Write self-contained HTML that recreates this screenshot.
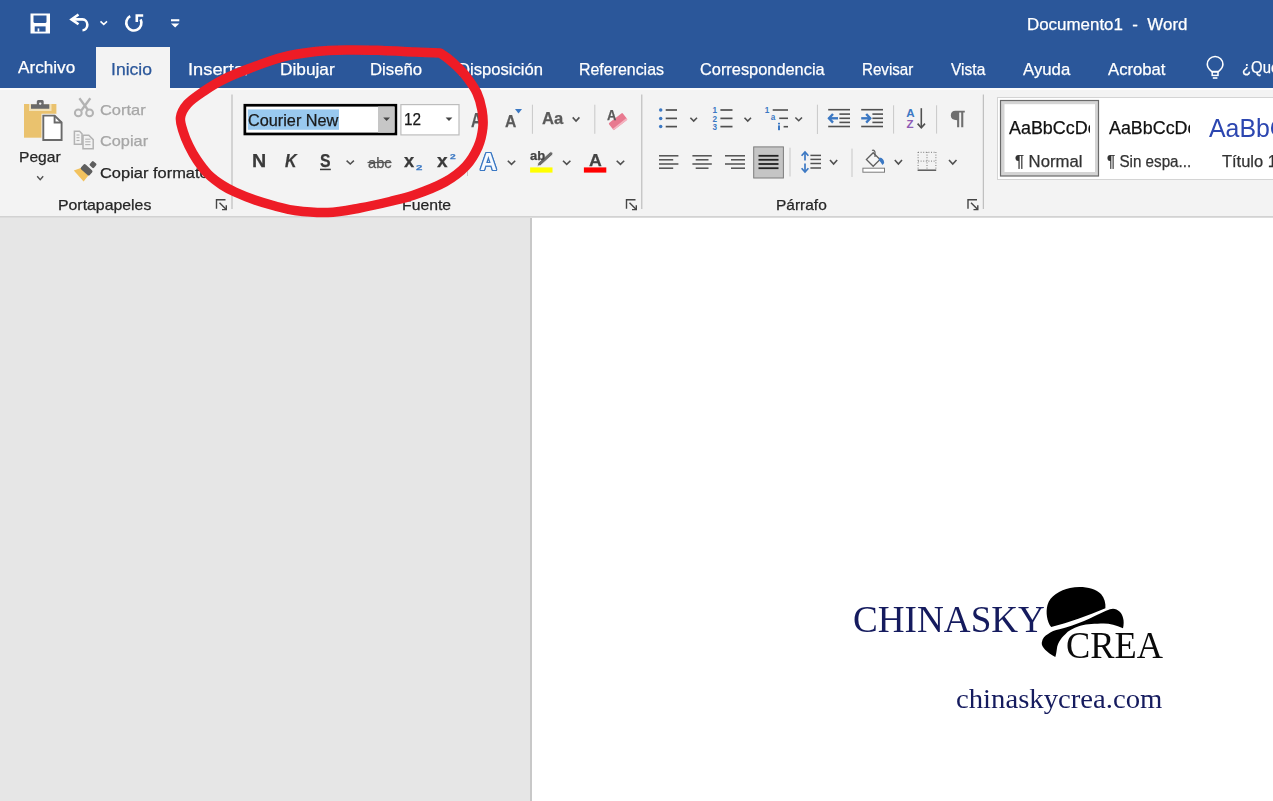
<!DOCTYPE html>
<html><head><meta charset="utf-8"><style>
html,body{margin:0;padding:0;width:1273px;height:801px;overflow:hidden;background:#e6e6e6;position:relative}
.t{position:absolute;white-space:pre;transform-origin:0 0;-webkit-text-stroke:0.25px currentColor}
.r{position:absolute}
svg{position:absolute;left:0;top:0}
</style></head><body>
<div class="r" style="left:0;top:0;width:1273px;height:88px;background:#2b579a"></div>
<div class="r" style="left:0;top:88px;width:1273px;height:128px;background:#f3f3f3"></div><div class="r" style="left:0;top:88px;width:1273px;height:2px;background:#fbfbfb"></div><div class="r" style="left:96px;top:47px;width:74px;height:43px;background:#f3f3f3"></div>
<div class="r" style="left:0;top:216px;width:1273px;height:1px;background:#d2d2d2"></div><div class="r" style="left:0;top:217px;width:1273px;height:1px;background:#dcdcdc"></div>
<div class="r" style="left:530px;top:218px;width:2px;height:583px;background:#c8c8c8"></div>
<div class="r" style="left:532px;top:218px;width:741px;height:583px;background:#fff"></div>
<svg width="1273" height="801" viewBox="0 0 1273 801">
<rect x="30.5" y="13.5" width="19.5" height="20.0" fill="#ffffff"/>
<path d="M33.5 15.5 H46.5 V21.5 Q46.5 23 45 23 H35 Q33.5 23 33.5 21.5 Z" fill="#2b579a"/>
<rect x="34.7" y="26.4" width="10.899999999999999" height="5.200000000000003" fill="#2b579a"/>
<rect x="37.6" y="28.4" width="1.6999999999999957" height="3.200000000000003" fill="#ffffff"/>
<path d="M72 19.4 H82.5 A4.8 5.4 0 0 1 82.5 30.3" fill="none" stroke="#fff" stroke-width="2.6"/>
<polyline points="78.5,14.5 71.5,19.4 78.5,24.2" fill="none" stroke="#fff" stroke-width="2.6" stroke-linejoin="miter"/>
<polyline points="100.5,21.3 103.75,24.3 107,21.3" fill="none" stroke="#fff" stroke-width="1.6"/>
<path d="M130.2 16.2 A7.6 7.6 0 1 0 140.6 19.4" fill="none" stroke="#fff" stroke-width="2.6"/>
<polyline points="136.8,22 136.8,15.5 143.2,15.5" fill="none" stroke="#fff" stroke-width="2.6"/>
<rect x="171" y="19.2" width="8.300000000000011" height="2.1000000000000014" fill="#ffffff"/>
<polygon points="171,23.6 179.3,23.6 175.15,27.6" fill="#fff"/>
<path d="M1211.8 71.6 Q1207.3 68.2 1207.3 64.3 A7.8 7.8 0 0 1 1222.9 64.3 Q1222.9 68.2 1218.4 71.6 Z" fill="none" stroke="#fff" stroke-width="1.6"/>
<rect x="1212.2" y="71.8" width="5.8" height="3.6" fill="none" stroke="#fff" stroke-width="1.5"/>
<line x1="1212.8" y1="78" x2="1217.4" y2="78" stroke="#fff" stroke-width="1.6"/>
<rect x="24" y="104" width="32.4" height="33.69999999999999" fill="#eac26e"/>
<rect x="29" y="104" width="22.5" height="7" fill="#f3e2b8"/>
<path d="M31 104.3 H36.8 V101.5 Q36.8 100 38.3 100 H42.3 Q43.7 100 43.7 101.5 V104.3 H49.3 V108.7 H31 Z" fill="#6a6a6a"/>
<circle cx="40.2" cy="103.6" r="1.2" fill="#f3f3f3"/>
<path d="M41.5 113.8 H56.5 L63.4 120.8 V141.8 H41.5 Z" fill="#f3f3f3"/>
<path d="M43.3 115.6 H54.6 L61.6 122.5 V140 H43.3 Z" fill="#fff" stroke="#6a6a6a" stroke-width="1.9"/>
<polyline points="54.6,115.6 54.6,122.5 61.6,122.5" fill="none" stroke="#6a6a6a" stroke-width="1.9"/>
<polyline points="37.2,176.3 40.2,179.6 43.2,176.3" fill="none" stroke="#505050" stroke-width="1.4"/>
<line x1="79.4" y1="98.2" x2="88.2" y2="110.2" stroke="#b3b3b3" stroke-width="2.3"/>
<line x1="90.3" y1="98.2" x2="81.5" y2="110.2" stroke="#b3b3b3" stroke-width="2.3"/>
<circle cx="78.3" cy="112.9" r="3.4" fill="none" stroke="#b3b3b3" stroke-width="2"/>
<circle cx="89.6" cy="112.9" r="3.4" fill="none" stroke="#b3b3b3" stroke-width="2"/>
<path d="M74.4 131.2 H79.5 L82 133.7 V144.3 H74.4 Z" fill="none" stroke="#b3b3b3" stroke-width="1.5"/>
<path d="M83 135.2 H88.8 L93.2 139.6 V148.8 H83 Z" fill="#f3f3f3" stroke="#b3b3b3" stroke-width="1.5"/>
<line x1="76.5" y1="135" x2="79.5" y2="135" stroke="#b3b3b3" stroke-width="1.1"/>
<line x1="76.5" y1="137.7" x2="79.5" y2="137.7" stroke="#b3b3b3" stroke-width="1.1"/>
<line x1="76.5" y1="140.5" x2="79.5" y2="140.5" stroke="#b3b3b3" stroke-width="1.1"/>
<line x1="85.2" y1="139.2" x2="90.5" y2="139.2" stroke="#b3b3b3" stroke-width="1.1"/>
<line x1="85.2" y1="141.8" x2="90.5" y2="141.8" stroke="#b3b3b3" stroke-width="1.1"/>
<line x1="85.2" y1="144.6" x2="90.5" y2="144.6" stroke="#b3b3b3" stroke-width="1.1"/>
<polygon points="73.8,170.6 80.8,168 88.4,175.4 83.6,181.6" fill="#f2c25e"/>
<g transform="translate(86.6,169.8) rotate(42)"><rect x="-5.8" y="-3.3" width="11.6" height="6.6" rx="1.6" fill="#5e5e5e"/></g>
<g transform="translate(93,164.6) rotate(42)"><rect x="-2.8" y="-2.8" width="5.6" height="5.6" rx="1.2" fill="#5e5e5e"/></g>
<polyline points="216.5,208.8 216.5,199.8 225.5,199.8" fill="none" stroke="#454545" stroke-width="1.4"/><line x1="219.5" y1="202.8" x2="226.0" y2="209.3" stroke="#454545" stroke-width="1.4"/><polyline points="226.3,205.3 226.3,209.60000000000002 222.0,209.60000000000002" fill="none" stroke="#454545" stroke-width="1.4"/>
<polyline points="626.5,208.8 626.5,199.8 635.5,199.8" fill="none" stroke="#454545" stroke-width="1.4"/><line x1="629.5" y1="202.8" x2="636.0" y2="209.3" stroke="#454545" stroke-width="1.4"/><polyline points="636.3,205.3 636.3,209.60000000000002 632.0,209.60000000000002" fill="none" stroke="#454545" stroke-width="1.4"/>
<polyline points="968,208.8 968,199.8 977,199.8" fill="none" stroke="#454545" stroke-width="1.4"/><line x1="971" y1="202.8" x2="977.5" y2="209.3" stroke="#454545" stroke-width="1.4"/><polyline points="977.8,205.3 977.8,209.60000000000002 973.5,209.60000000000002" fill="none" stroke="#454545" stroke-width="1.4"/>
<rect x="231.5" y="94.5" width="1" height="114.5" fill="#b4b4b4"/>
<rect x="641.3" y="94.5" width="1" height="114.5" fill="#b4b4b4"/>
<rect x="982.8" y="94.5" width="1" height="114.5" fill="#b4b4b4"/>
<rect x="243.5" y="103.9" width="153.7" height="31.400000000000006" fill="#000"/>
<rect x="246.2" y="106.6" width="148.3" height="26.0" fill="#fff"/>
<rect x="247.8" y="109.4" width="91.19999999999999" height="20.400000000000006" fill="#99c9ef"/>
<rect x="378" y="106.6" width="16.5" height="26.0" fill="#c6c6c6"/>
<polygon points="383.2,117.4 390,117.4 386.6,121" fill="#444"/>
<rect x="400.3" y="104" width="59.30000000000001" height="31.5" fill="#bdbdbd"/>
<rect x="401.5" y="105.2" width="56.89999999999998" height="29.10000000000001" fill="#fff"/>
<polygon points="445.6,117.6 452.4,117.6 449,121" fill="#444"/>
<rect x="531.9" y="104.7" width="1" height="29.10000000000001" fill="#c8c8c8"/>
<rect x="594.3" y="104.7" width="1" height="29.10000000000001" fill="#c8c8c8"/>
<polygon points="515,109 522,109 518.5,113.6" fill="#3b78c3"/>
<polygon points="477,112 484,112 480.5,116.5" fill="#3b78c3" transform="rotate(180 480.5 114.2)"/>
<polyline points="572.7,117.4 576.05,121.1 579.4,117.4" fill="none" stroke="#505050" stroke-width="1.6"/>
<g transform="translate(618,121.5) rotate(-38)"><rect x="-8.8" y="-4.3" width="17.6" height="8.6" rx="1.2" fill="#e8798f"/><rect x="-8.8" y="2.5" width="17.6" height="1.8" fill="#f4b3c0"/></g>
<polyline points="346.6,160.6 350.25,164 353.9,160.6" fill="none" stroke="#505050" stroke-width="1.5"/>
<rect x="320" y="168.7" width="10.800000000000011" height="1.5" fill="#3a3a3a"/>
<line x1="367.5" y1="162.5" x2="391.5" y2="162.5" stroke="#555" stroke-width="1.2"/>
<rect x="467.0" y="166.6" width="1" height="9.400000000000006" fill="#c8c8c8"/>
<polyline points="507.8,160.7 511.5,164.4 515.2,160.7" fill="none" stroke="#505050" stroke-width="1.6"/>
<polyline points="563,160.7 566.7,164.4 570.4,160.7" fill="none" stroke="#505050" stroke-width="1.6"/>
<polyline points="616.7,160.7 620.45,164.4 624.2,160.7" fill="none" stroke="#505050" stroke-width="1.6"/>
<g transform="translate(544.5,159.5) rotate(-42)"><path d="M-10 0 L-7 -1.9 H9 Q10.5 -1.9 10.5 0 Q10.5 1.9 9 1.9 H-7 Z" fill="#6a6a6a" stroke="#f3f3f3" stroke-width="0.8"/></g>
<rect x="530.1" y="167.4" width="22.399999999999977" height="5.199999999999989" fill="#ffff00"/>
<rect x="583.9" y="167.4" width="22.399999999999977" height="5.199999999999989" fill="#ff0000"/>
<circle cx="660.7" cy="110" r="1.75" fill="#3b78c3"/>
<line x1="665.7" y1="110" x2="677" y2="110" stroke="#505050" stroke-width="1.7"/>
<circle cx="660.7" cy="118.4" r="1.75" fill="#3b78c3"/>
<line x1="665.7" y1="118.4" x2="677" y2="118.4" stroke="#505050" stroke-width="1.7"/>
<circle cx="660.7" cy="126.6" r="1.75" fill="#3b78c3"/>
<line x1="665.7" y1="126.6" x2="677" y2="126.6" stroke="#505050" stroke-width="1.7"/>
<polyline points="690.4,117.7 693.7,121 697,117.7" fill="none" stroke="#505050" stroke-width="1.6"/>
<line x1="720.4" y1="110" x2="732.5" y2="110" stroke="#505050" stroke-width="1.7"/>
<line x1="720.4" y1="118.4" x2="732.5" y2="118.4" stroke="#505050" stroke-width="1.7"/>
<line x1="720.4" y1="126.6" x2="732.5" y2="126.6" stroke="#505050" stroke-width="1.7"/>
<text x="712.6" y="113.3" font-family="Liberation Sans" font-weight="bold" font-size="8.2" fill="#3b78c3">1</text>
<text x="712.6" y="121.6" font-family="Liberation Sans" font-weight="bold" font-size="8.2" fill="#3b78c3">2</text>
<text x="712.6" y="129.9" font-family="Liberation Sans" font-weight="bold" font-size="8.2" fill="#3b78c3">3</text>
<polyline points="744.5,117.7 747.75,121 751,117.7" fill="none" stroke="#505050" stroke-width="1.6"/>
<text x="764.8" y="113.3" font-family="Liberation Sans" font-weight="bold" font-size="8.2" fill="#3b78c3">1</text>
<text x="770.8" y="120.4" font-family="Liberation Sans" font-weight="bold" font-size="8.2" fill="#3b78c3">a</text>
<rect x="778" y="122.8" width="2" height="1.6000000000000085" fill="#3b78c3"/>
<rect x="778" y="125.4" width="2" height="4.799999999999983" fill="#3b78c3"/>
<line x1="772.7" y1="110" x2="788" y2="110" stroke="#505050" stroke-width="1.6"/>
<line x1="779.2" y1="118.3" x2="788" y2="118.3" stroke="#505050" stroke-width="1.6"/>
<line x1="783.6" y1="126.7" x2="788" y2="126.7" stroke="#505050" stroke-width="1.6"/>
<polyline points="795.4,117.5 798.7,120.7 802,117.5" fill="none" stroke="#505050" stroke-width="1.6"/>
<rect x="816.9" y="104.7" width="1" height="29.299999999999997" fill="#c8c8c8"/>
<line x1="828.2" y1="109.7" x2="850.0" y2="109.7" stroke="#505050" stroke-width="1.6"/><line x1="828.2" y1="126.5" x2="850.0" y2="126.5" stroke="#505050" stroke-width="1.6"/><line x1="839.4000000000001" y1="114.1" x2="850.0" y2="114.1" stroke="#505050" stroke-width="1.6"/><line x1="839.4000000000001" y1="118.3" x2="850.0" y2="118.3" stroke="#505050" stroke-width="1.6"/><line x1="839.4000000000001" y1="122.4" x2="850.0" y2="122.4" stroke="#505050" stroke-width="1.6"/><line x1="828.7" y1="118.3" x2="838.0" y2="118.3" stroke="#3b78c3" stroke-width="2.4"/><polyline points="833.0,114 829.0,118.3 833.0,122.6" fill="none" stroke="#3b78c3" stroke-width="2.4"/>
<line x1="861.2" y1="109.7" x2="883.0" y2="109.7" stroke="#505050" stroke-width="1.6"/><line x1="861.2" y1="126.5" x2="883.0" y2="126.5" stroke="#505050" stroke-width="1.6"/><line x1="872.4000000000001" y1="114.1" x2="883.0" y2="114.1" stroke="#505050" stroke-width="1.6"/><line x1="872.4000000000001" y1="118.3" x2="883.0" y2="118.3" stroke="#505050" stroke-width="1.6"/><line x1="872.4000000000001" y1="122.4" x2="883.0" y2="122.4" stroke="#505050" stroke-width="1.6"/><line x1="861.2" y1="118.3" x2="870.5" y2="118.3" stroke="#3b78c3" stroke-width="2.4"/><polyline points="866.2,114 870.2,118.3 866.2,122.6" fill="none" stroke="#3b78c3" stroke-width="2.4"/>
<rect x="893.1" y="105.3" width="1" height="28.299999999999997" fill="#c8c8c8"/>
<text x="906.2" y="116.6" font-family="Liberation Sans" font-weight="bold" font-size="11.6" fill="#3b78c3">A</text>
<text x="906.6" y="128.3" font-family="Liberation Sans" font-weight="bold" font-size="11.6" fill="#8e5bb5">Z</text>
<line x1="921.3" y1="108.2" x2="921.3" y2="127.6" stroke="#505050" stroke-width="1.6"/>
<polyline points="917.6,123.6 921.3,127.8 925,123.6" fill="none" stroke="#505050" stroke-width="1.6"/>
<rect x="936.1" y="105.3" width="1" height="28.299999999999997" fill="#c8c8c8"/>
<path d="M955.5 110.8 H964.8 V112.6 H963.3 V127.2 H961.2 V112.6 H959.2 V127.2 H957.1 V120.2 Q950.8 120 950.8 115.5 Q950.8 110.8 955.5 110.8 Z" fill="#6f6f6f"/>
<line x1="659" y1="155.8" x2="678.4" y2="155.8" stroke="#505050" stroke-width="1.5"/><line x1="659" y1="159.8" x2="673.2" y2="159.8" stroke="#505050" stroke-width="1.5"/><line x1="659" y1="164" x2="678.4" y2="164" stroke="#505050" stroke-width="1.5"/><line x1="659" y1="168.2" x2="673.2" y2="168.2" stroke="#505050" stroke-width="1.5"/>
<line x1="692.4" y1="155.8" x2="711.8" y2="155.8" stroke="#505050" stroke-width="1.5"/><line x1="695.7" y1="159.8" x2="708.5" y2="159.8" stroke="#505050" stroke-width="1.5"/><line x1="692.4" y1="164" x2="711.8" y2="164" stroke="#505050" stroke-width="1.5"/><line x1="695.7" y1="168.2" x2="708.5" y2="168.2" stroke="#505050" stroke-width="1.5"/>
<line x1="725" y1="155.8" x2="745" y2="155.8" stroke="#505050" stroke-width="1.5"/><line x1="731" y1="159.8" x2="745" y2="159.8" stroke="#505050" stroke-width="1.5"/><line x1="725" y1="164" x2="745" y2="164" stroke="#505050" stroke-width="1.5"/><line x1="731" y1="168.2" x2="745" y2="168.2" stroke="#505050" stroke-width="1.5"/>
<rect x="753.7" y="146.9" width="29.7" height="31.1" fill="#c5c5c5" stroke="#7d7d7d" stroke-width="1"/>
<line x1="758.5" y1="155.8" x2="778.5" y2="155.8" stroke="#222" stroke-width="1.8"/>
<line x1="758.5" y1="159.8" x2="778.5" y2="159.8" stroke="#222" stroke-width="1.8"/>
<line x1="758.5" y1="164" x2="778.5" y2="164" stroke="#222" stroke-width="1.8"/>
<line x1="758.5" y1="168.2" x2="778.5" y2="168.2" stroke="#222" stroke-width="1.8"/>
<rect x="789.5" y="147.7" width="1" height="28.80000000000001" fill="#c8c8c8"/>
<line x1="805" y1="152.5" x2="805" y2="160.5" stroke="#3b78c3" stroke-width="1.7"/>
<line x1="805" y1="163.5" x2="805" y2="171.5" stroke="#3b78c3" stroke-width="1.7"/>
<polyline points="801.6,155.8 805,152 808.4,155.8" fill="none" stroke="#3b78c3" stroke-width="1.7"/>
<polyline points="801.6,168.2 805,172 808.4,168.2" fill="none" stroke="#3b78c3" stroke-width="1.7"/>
<line x1="810.4" y1="155.4" x2="821" y2="155.4" stroke="#505050" stroke-width="1.5"/>
<line x1="810.4" y1="159.4" x2="821" y2="159.4" stroke="#505050" stroke-width="1.5"/>
<line x1="810.4" y1="163.5" x2="821" y2="163.5" stroke="#505050" stroke-width="1.5"/>
<line x1="810.4" y1="168" x2="821" y2="168" stroke="#505050" stroke-width="1.5"/>
<polyline points="830,160 833.6,164 837.2,160" fill="none" stroke="#505050" stroke-width="1.6"/>
<rect x="851.5" y="148.6" width="1" height="28.400000000000006" fill="#c8c8c8"/>
<g transform="translate(873.2,159.5) rotate(45)"><rect x="-4.8" y="-4.8" width="9.6" height="9.6" fill="#f6f6f6" stroke="#606060" stroke-width="1.3"/></g>
<path d="M872 150.5 Q874 149.5 875 152 L875 157" fill="none" stroke="#606060" stroke-width="1.2"/>
<path d="M879.6 157.5 Q884 158 884.2 163 L882.5 165 Q880 161 878.6 160 Z" fill="#3b78c3"/>
<rect x="862.9" y="168.2" width="21.6" height="4" fill="#fff" stroke="#7b7b7b" stroke-width="1"/>
<polyline points="894.8,160 898.4,164 902,160" fill="none" stroke="#505050" stroke-width="1.6"/>
<line x1="918" y1="152.3" x2="936" y2="152.3" stroke="#7a7a7a" stroke-width="1" stroke-dasharray="1 1.6"/>
<line x1="918" y1="161.1" x2="936" y2="161.1" stroke="#7a7a7a" stroke-width="1" stroke-dasharray="1 1.6"/>
<line x1="918.1" y1="152" x2="918.1" y2="169.5" stroke="#7a7a7a" stroke-width="1" stroke-dasharray="1 1.6"/>
<line x1="927" y1="152" x2="927" y2="169.5" stroke="#7a7a7a" stroke-width="1" stroke-dasharray="1 1.6"/>
<line x1="935.9" y1="152" x2="935.9" y2="169.5" stroke="#7a7a7a" stroke-width="1" stroke-dasharray="1 1.6"/>
<line x1="917.6" y1="170.2" x2="936.2" y2="170.2" stroke="#5a5a5a" stroke-width="1.5"/>
<polyline points="949,160 952.75,164 956.5,160" fill="none" stroke="#505050" stroke-width="1.6"/>
<rect x="997.5" y="97.5" width="290" height="82" fill="#fff" stroke="#d4d4d4" stroke-width="1"/>
<rect x="1000.5" y="100.5" width="98" height="75.5" fill="#d4d4d4" stroke="#6a6a6a" stroke-width="1.2"/>
<rect x="1004.5" y="104.2" width="90.5" height="67.8" fill="#fff"/>
<path d="M1051.2 627 C1047 622 1045.5 612 1047.5 605 C1050 596 1060 590 1070 588 C1082 585.5 1095 588 1101 594 C1104.5 598 1105.8 603 1105.4 608.3 C1087.3 616 1069.3 622.3 1051.2 627 Z" fill="#000"/>
<path d="M1055.3 657.1 C1047 652 1041 647 1041.8 642.4 C1042.5 638 1045 635.5 1047.7 634.2 C1051 631.5 1055 630 1059.5 629.2 C1077 625 1092 617.5 1106 610.8 C1109 609.5 1111 608.8 1113 608.8 C1118 609 1122 613 1123 617.7 C1124 621 1123.8 625 1123 628.3 C1115 624.5 1108 623 1100.7 623.6 C1092 624 1084 624.5 1079.5 626 C1073 628 1068 631 1065.3 634.2 C1060 639 1057.5 644 1057 648 C1056.5 652 1056 655 1055.3 657.1 Z" fill="#000"/>
</svg>
<div class="t" style="left:1026.65px;top:15.40px;font-family:'Liberation Sans',sans-serif;font-weight:normal;font-style:normal;font-size:17.00px;line-height:19px;color:#fff;transform:scaleX(0.9951);">Documento1&#160;&#160;-&#160;&#160;Word</div>
<div class="t" style="left:18.00px;top:58.20px;font-family:'Liberation Sans',sans-serif;font-weight:normal;font-style:normal;font-size:17.00px;line-height:19px;color:#fff;transform:scaleX(1.0087);">Archivo</div>
<div class="t" style="left:188.35px;top:59.80px;font-family:'Liberation Sans',sans-serif;font-weight:normal;font-style:normal;font-size:17.00px;line-height:19px;color:#fff;transform:scaleX(1.0760);">Insertar</div>
<div class="t" style="left:279.62px;top:59.80px;font-family:'Liberation Sans',sans-serif;font-weight:normal;font-style:normal;font-size:17.00px;line-height:19px;color:#fff;transform:scaleX(1.0155);">Dibujar</div>
<div class="t" style="left:369.66px;top:59.80px;font-family:'Liberation Sans',sans-serif;font-weight:normal;font-style:normal;font-size:17.00px;line-height:19px;color:#fff;transform:scaleX(0.9837);">Diseño</div>
<div class="t" style="left:458.47px;top:59.80px;font-family:'Liberation Sans',sans-serif;font-weight:normal;font-style:normal;font-size:17.00px;line-height:19px;color:#fff;transform:scaleX(0.9774);">Disposición</div>
<div class="t" style="left:579.03px;top:59.80px;font-family:'Liberation Sans',sans-serif;font-weight:normal;font-style:normal;font-size:17.00px;line-height:19px;color:#fff;transform:scaleX(0.9364);">Referencias</div>
<div class="t" style="left:699.88px;top:59.80px;font-family:'Liberation Sans',sans-serif;font-weight:normal;font-style:normal;font-size:17.00px;line-height:19px;color:#fff;transform:scaleX(0.9626);">Correspondencia</div>
<div class="t" style="left:862.09px;top:59.80px;font-family:'Liberation Sans',sans-serif;font-weight:normal;font-style:normal;font-size:17.00px;line-height:19px;color:#fff;transform:scaleX(0.8904);">Revisar</div>
<div class="t" style="left:951.32px;top:59.80px;font-family:'Liberation Sans',sans-serif;font-weight:normal;font-style:normal;font-size:17.00px;line-height:19px;color:#fff;transform:scaleX(0.9144);">Vista</div>
<div class="t" style="left:1022.80px;top:59.80px;font-family:'Liberation Sans',sans-serif;font-weight:normal;font-style:normal;font-size:17.00px;line-height:19px;color:#fff;transform:scaleX(0.9863);">Ayuda</div>
<div class="t" style="left:1107.60px;top:59.80px;font-family:'Liberation Sans',sans-serif;font-weight:normal;font-style:normal;font-size:17.00px;line-height:19px;color:#fff;transform:scaleX(0.9815);">Acrobat</div>
<div class="t" style="left:111.42px;top:59.60px;font-family:'Liberation Sans',sans-serif;font-weight:normal;font-style:normal;font-size:17.00px;line-height:19px;color:#2b579a;transform:scaleX(1.0324);">Inicio</div>
<div class="t" style="left:1242.43px;top:58.30px;font-family:'Liberation Sans',sans-serif;font-weight:normal;font-style:normal;font-size:17.00px;line-height:19px;color:#fff;transform:scaleX(0.8751);">¿Qué</div>
<div class="t" style="left:18.95px;top:147.80px;font-family:'Liberation Sans',sans-serif;font-weight:normal;font-style:normal;font-size:15.00px;line-height:17px;color:#262626;transform:scaleX(1.0402);">Pegar</div>
<div class="t" style="left:99.98px;top:100.75px;font-family:'Liberation Sans',sans-serif;font-weight:normal;font-style:normal;font-size:15.00px;line-height:17px;color:#a6a6a6;transform:scaleX(1.0947);">Cortar</div>
<div class="t" style="left:99.98px;top:132.10px;font-family:'Liberation Sans',sans-serif;font-weight:normal;font-style:normal;font-size:15.00px;line-height:17px;color:#a6a6a6;transform:scaleX(1.0880);">Copiar</div>
<div class="t" style="left:99.98px;top:163.50px;font-family:'Liberation Sans',sans-serif;font-weight:normal;font-style:normal;font-size:15.00px;line-height:17px;color:#262626;transform:scaleX(1.0953);">Copiar&#160;formato</div>
<div class="t" style="left:57.53px;top:196.00px;font-family:'Liberation Sans',sans-serif;font-weight:normal;font-style:normal;font-size:15.00px;line-height:17px;color:#262626;transform:scaleX(1.0554);">Portapapeles</div>
<div class="t" style="left:401.64px;top:196.20px;font-family:'Liberation Sans',sans-serif;font-weight:normal;font-style:normal;font-size:15.00px;line-height:17px;color:#262626;transform:scaleX(1.0519);">Fuente</div>
<div class="t" style="left:776.46px;top:196.20px;font-family:'Liberation Sans',sans-serif;font-weight:normal;font-style:normal;font-size:15.00px;line-height:17px;color:#262626;transform:scaleX(1.0316);">Párrafo</div>
<div class="t" style="left:248.09px;top:111.50px;font-family:'Liberation Sans',sans-serif;font-weight:normal;font-style:normal;font-size:16.00px;line-height:17px;color:#1a1a1a;transform:scaleX(1.0163);">Courier&#160;New</div>
<div class="t" style="left:404.25px;top:111.40px;font-family:'Liberation Sans',sans-serif;font-weight:normal;font-style:normal;font-size:16.00px;line-height:17px;color:#1a1a1a;transform:scaleX(0.9581);">12</div>
<div class="t" style="left:470.82px;top:109.00px;font-family:'Liberation Sans',sans-serif;font-weight:bold;font-style:normal;font-size:20.43px;line-height:22px;color:#5a5a5a;transform:scaleX(0.7523);">A</div>
<div class="t" style="left:505.11px;top:112.00px;font-family:'Liberation Sans',sans-serif;font-weight:bold;font-style:normal;font-size:16.09px;line-height:18px;color:#5a5a5a;transform:scaleX(0.9742);">A</div>
<div class="t" style="left:542.39px;top:108.10px;font-family:'Liberation Sans',sans-serif;font-weight:bold;font-style:normal;font-size:17.25px;line-height:20px;color:#5a5a5a;transform:scaleX(0.9618);">Aa</div>
<div class="t" style="left:607.48px;top:105.60px;font-family:'Liberation Sans',sans-serif;font-weight:bold;font-style:normal;font-size:15.07px;line-height:17px;color:#5a5a5a;transform:scaleX(0.8615);">A</div>
<div class="t" style="left:251.82px;top:151.10px;font-family:'Liberation Sans',sans-serif;font-weight:bold;font-style:normal;font-size:17.68px;line-height:20px;color:#3a3a3a;transform:scaleX(1.1120);">N</div>
<div class="t" style="left:284.88px;top:151.10px;font-family:'Liberation Sans',sans-serif;font-weight:bold;font-style:italic;font-size:17.68px;line-height:20px;color:#3a3a3a;transform:scaleX(0.9079);">K</div>
<div class="t" style="left:320.42px;top:151.10px;font-family:'Liberation Sans',sans-serif;font-weight:bold;font-style:normal;font-size:17.68px;line-height:20px;color:#3a3a3a;transform:scaleX(0.8955);">S</div>
<div class="t" style="left:367.71px;top:153.70px;font-family:'Liberation Sans',sans-serif;font-weight:normal;font-style:normal;font-size:15.00px;line-height:17px;color:#555;transform:scaleX(0.9795);">abc</div>
<div class="t" style="left:404.42px;top:151.30px;font-family:'Liberation Sans',sans-serif;font-weight:bold;font-style:normal;font-size:17.50px;line-height:20px;color:#3a3a3a;transform:scaleX(1.0476);">x</div>
<div class="t" style="left:437.41px;top:151.30px;font-family:'Liberation Sans',sans-serif;font-weight:bold;font-style:normal;font-size:17.50px;line-height:20px;color:#3a3a3a;transform:scaleX(1.0899);">x</div>
<div class="t" style="left:415.60px;top:163.20px;font-family:'Liberation Sans',sans-serif;font-weight:bold;font-style:normal;font-size:7.25px;line-height:9px;color:#3b78c3;transform:scaleX(1.5813);">2</div>
<div class="t" style="left:449.64px;top:152.00px;font-family:'Liberation Sans',sans-serif;font-weight:bold;font-style:normal;font-size:7.25px;line-height:9px;color:#3b78c3;transform:scaleX(1.4087);">2</div>
<div class="t" style="left:480.42px;top:148.50px;font-family:'Liberation Sans',sans-serif;font-weight:bold;font-style:normal;font-size:23.00px;line-height:26px;color:#f7faff;transform:scaleX(1.0123);text-shadow:1.3px 0px 0 #3b78c3,-1.3px 0px 0 #3b78c3,0px 1.3px 0 #3b78c3,0px -1.3px 0 #3b78c3,0.9px 0.9px 0 #3b78c3,-0.9px 0.9px 0 #3b78c3,0.9px -0.9px 0 #3b78c3,-0.9px -0.9px 0 #3b78c3;-webkit-text-stroke:0;">A</div>
<div class="t" style="left:529.91px;top:148.80px;font-family:'Liberation Sans',sans-serif;font-weight:bold;font-style:normal;font-size:12.00px;line-height:14px;color:#444;transform:scaleX(1.0807);">ab</div>
<div class="t" style="left:589.46px;top:150.00px;font-family:'Liberation Sans',sans-serif;font-weight:bold;font-style:normal;font-size:17.39px;line-height:20px;color:#444;transform:scaleX(1.0213);">A</div>
<div class="r" style="left:1005px;top:110px;width:84.5px;height:30px;overflow:hidden"><div class="t" style="left:4.10px;top:7.80px;font-family:'Liberation Sans',sans-serif;font-weight:normal;font-style:normal;font-size:17.68px;line-height:20px;color:#111;transform:scaleX(1.0140);">AaBbCcDc</div></div>
<div class="r" style="left:1100px;top:110px;width:89.7px;height:30px;overflow:hidden"><div class="t" style="left:8.80px;top:7.10px;font-family:'Liberation Sans',sans-serif;font-weight:normal;font-style:normal;font-size:18.70px;line-height:21px;color:#111;transform:scaleX(0.9565);">AaBbCcDc</div></div>
<div class="t" style="left:1208.70px;top:112.80px;font-family:'Liberation Sans',sans-serif;font-weight:normal;font-style:normal;font-size:26.52px;line-height:30px;color:#2c46b0;transform:scaleX(0.9375);-webkit-text-stroke:0;">AaBbC</div>
<div class="t" style="left:1015.43px;top:153.20px;font-family:'Liberation Sans',sans-serif;font-weight:normal;font-style:normal;font-size:16.00px;line-height:17px;color:#333;transform:scaleX(1.0433);">¶&#160;Normal</div>
<div class="t" style="left:1106.89px;top:153.20px;font-family:'Liberation Sans',sans-serif;font-weight:normal;font-style:normal;font-size:16.00px;line-height:17px;color:#333;transform:scaleX(0.9505);">¶&#160;Sin&#160;espa...</div>
<div class="t" style="left:1221.97px;top:153.20px;font-family:'Liberation Sans',sans-serif;font-weight:normal;font-style:normal;font-size:16.00px;line-height:17px;color:#333;transform:scaleX(1.0272);">Título&#160;1</div>
<div class="t" style="left:852.51px;top:597.70px;font-family:'Liberation Serif',serif;font-weight:normal;font-style:normal;font-size:38.31px;line-height:42px;color:#151b5e;transform:scaleX(0.9700);-webkit-text-stroke:0;">CHINASKY</div>
<div class="t" style="left:1066.25px;top:623.60px;font-family:'Liberation Serif',serif;font-weight:normal;font-style:normal;font-size:38.46px;line-height:42px;color:#0a0a0a;transform:scaleX(0.9457);-webkit-text-stroke:0;">CREA</div>
<div class="t" style="left:956.15px;top:682.90px;font-family:'Liberation Serif',serif;font-weight:normal;font-style:normal;font-size:28.30px;line-height:31px;color:#151b5e;transform:scaleX(1.0145);-webkit-text-stroke:0;">chinaskycrea.com</div>
<svg width="1273" height="801" viewBox="0 0 1273 801">
<defs><filter id="bl" x="-5%" y="-5%" width="110%" height="110%"><feGaussianBlur stdDeviation="0.6"/></filter></defs><path filter="url(#bl)" d="M440.0 53.0 C435.8 52.8 424.7 52.4 415.0 52.0 C405.3 51.6 393.0 50.8 382.0 50.5 C371.0 50.2 360.0 49.8 349.0 50.0 C338.0 50.2 327.0 50.3 316.0 51.5 C305.0 52.7 294.0 54.2 283.0 57.0 C272.0 59.8 259.9 64.5 250.0 68.3 C240.1 72.0 231.2 75.6 223.4 79.5 C215.6 83.4 209.4 87.4 203.4 91.5 C197.4 95.6 191.2 99.7 187.4 104.0 C183.6 108.3 181.2 112.8 180.5 117.5 C179.8 122.2 181.9 127.2 183.3 132.0 C184.7 136.8 186.7 141.3 189.0 146.0 C191.3 150.7 193.8 155.3 197.0 160.0 C200.2 164.7 203.8 169.8 208.0 174.0 C212.2 178.2 217.5 182.0 222.0 185.0 C226.5 188.0 229.5 189.5 235.0 192.0 C240.5 194.5 248.3 197.7 255.0 200.0 C261.7 202.3 268.3 204.2 275.0 206.0 C281.7 207.8 286.2 209.4 295.0 210.5 C303.8 211.6 317.2 212.9 328.0 212.5 C338.8 212.1 349.7 209.8 360.0 208.0 C370.3 206.2 381.0 203.7 390.0 201.5 C399.0 199.3 404.8 198.2 414.0 195.0 C423.2 191.8 436.3 186.8 445.0 182.0 C453.7 177.2 460.5 171.8 466.0 166.0 C471.5 160.2 475.2 153.3 478.0 147.0 C480.8 140.7 482.1 134.2 482.8 128.0 C483.5 121.8 483.0 115.8 482.0 110.0 C481.0 104.2 479.5 98.4 477.0 93.0 C474.5 87.6 470.3 81.9 467.0 77.5 C463.7 73.1 460.2 69.7 457.0 66.5 C453.8 63.3 450.8 60.8 448.0 58.5 C445.2 56.2 441.3 53.9 440.0 53.0" fill="none" stroke="#ee1c25" stroke-width="9.5" stroke-linecap="round" stroke-linejoin="round"/>
</svg>
</body></html>
